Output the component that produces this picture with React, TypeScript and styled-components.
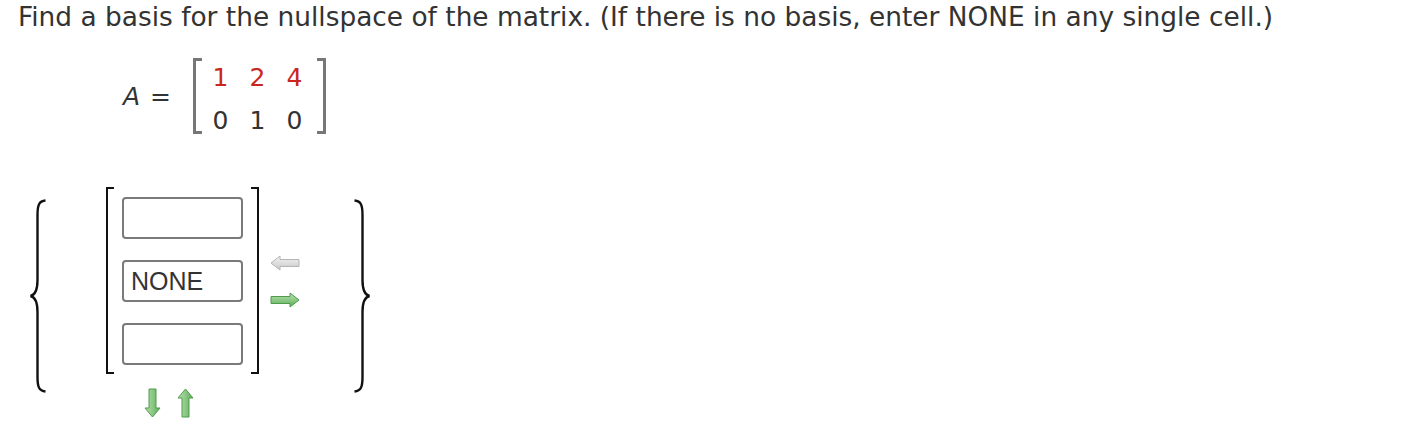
import React from 'react';
import styled, { createGlobalStyle } from 'styled-components';

const GlobalStyle = createGlobalStyle`
    body {
        margin: 0;
        background: #fff;
        font-family: "DejaVu Sans", Verdana, sans-serif;
        color: #333;
    }
`;

const Page = styled.div`
    padding: 2px 0 0 18px;
`;

const Prompt = styled.div`
    font-size: 26.4px;
    line-height: 30px;
    white-space: nowrap;
`;

const MatrixLine = styled.div`
    display: flex;
    align-items: center;
    margin: 26px 0 0 105px;
    height: 76px;
`;

const Label = styled.span`
    font-size: 25px;
    margin-right: 22px;
    i { margin-right: 10px; }
`;

const Bracket = styled.div<{ side: 'left' | 'right'; color?: string; weight?: number }>`
    align-self: stretch;
    width: 6px;
    border: ${p => p.weight || 3}px solid ${p => p.color || '#777'};
    ${p => (p.side === 'left' ? 'border-right: none;' : 'border-left: none;')}
`;

const Grid = styled.div`
    display: grid;
    grid-template-columns: repeat(3, 37px);
    grid-auto-rows: 43px;
    align-items: center;
    justify-items: center;
    padding: 5px 4px 0 0;
    font-size: 25px;
`;

const Cell = styled.span<{ red?: boolean }>`
    color: ${p => (p.red ? '#c9271d' : '#333')};
`;

const AnswerRow = styled.div`
    display: flex;
    align-items: flex-start;
    margin-top: 53px;
`;

const Brace = styled.div`
    margin-top: 12px;
    flex: none;
    display: flex;
`;

const VectorColumn = styled.div`
    display: flex;
    flex-direction: column;
    margin-left: 59px;
`;

const VectorRow = styled.div`
    display: flex;
    align-items: center;
`;

const Vector = styled.div`
    display: flex;
    height: 187px;
`;

const Entries = styled.div`
    display: flex;
    flex-direction: column;
    gap: 21px;
    padding: 10px 8px 0 8px;
`;

const Entry = styled.input`
    box-sizing: border-box;
    width: 121px;
    height: 42px;
    border: 2px solid #7a7a7a;
    border-radius: 4px;
    padding: 0 7px;
    font-family: "Liberation Sans", Arial, sans-serif;
    font-size: 25px;
    color: #333;
    background: #fff;
    outline: none;
`;

const SideArrows = styled.div`
    display: flex;
    flex-direction: column;
    gap: 21px;
    margin: 2px 0 0 11px;
`;

const BottomArrows = styled.div`
    display: flex;
    gap: 16px;
    margin: 14px 0 0 38px;
`;

const RightBrace = styled(Brace)`
    margin-left: 53px;
`;

const CurlyBrace = ({ flip }: { flip?: boolean }) => (
    <svg width="18" height="194" viewBox="0 0 18 194" style={flip ? { transform: 'scaleX(-1)' } : undefined}>
        <path
            d="M16.5 1.5 C10 2 8.5 6 8.5 16 L8.5 81 C8.5 92 6 96 1.5 97 C6 98 8.5 102 8.5 113 L8.5 178 C8.5 188 10 192 16.5 192.5"
            fill="none"
            stroke="#111"
            strokeWidth="2.4"
        />
    </svg>
);

const HArrow = ({ dir, tone }: { dir: 'left' | 'right'; tone: 'gray' | 'green' }) => {
    const id = `h-${dir}-${tone}`;
    const stops = tone === 'gray' ? ['#f4f4f4', '#c8c8c8'] : ['#b8e2b0', '#5fae5a'];
    const edge = tone === 'gray' ? '#b4b4b4' : '#4f9a4b';
    return (
        <svg width="30" height="16" viewBox="0 0 30 16" style={dir === 'right' ? { transform: 'scaleX(-1)' } : undefined}>
            <defs>
                <linearGradient id={id} x1="0" y1="0" x2="0" y2="1">
                    <stop offset="0" stopColor={stops[0]} />
                    <stop offset="1" stopColor={stops[1]} />
                </linearGradient>
            </defs>
            <path d="M1 8 L10 1 L10 4.5 L29 4.5 L29 11.5 L10 11.5 L10 15 Z" fill={`url(#${id})`} stroke={edge} strokeWidth="1" strokeLinejoin="round" />
        </svg>
    );
};

const VArrow = ({ dir }: { dir: 'up' | 'down' }) => {
    const id = `v-${dir}`;
    return (
        <svg width="17" height="30" viewBox="0 0 17 30" style={dir === 'down' ? { transform: 'scaleY(-1)' } : undefined}>
            <defs>
                <linearGradient id={id} x1="0" y1="0" x2="1" y2="0">
                    <stop offset="0" stopColor="#b8e2b0" />
                    <stop offset="1" stopColor="#5fae5a" />
                </linearGradient>
            </defs>
            <path d="M8.5 1 L16 10 L12 10 L12 29 L5 29 L5 10 L1 10 Z" fill={`url(#${id})`} stroke="#4f9a4b" strokeWidth="1" strokeLinejoin="round" />
        </svg>
    );
};

const App = () => (
    <Page>
        <GlobalStyle />
        <Prompt>
            Find a basis for the nullspace of the matrix. (If there is no basis, enter NONE in any single cell.)
        </Prompt>

        <MatrixLine>
            <Label><i>A</i>=</Label>
            <Bracket side="left" />
            <Grid>
                <Cell red>1</Cell>
                <Cell red>2</Cell>
                <Cell red>4</Cell>
                <Cell>0</Cell>
                <Cell>1</Cell>
                <Cell>0</Cell>
            </Grid>
            <Bracket side="right" />
        </MatrixLine>

        <AnswerRow>
            <Brace style={{ marginLeft: 11 }}>
                <CurlyBrace />
            </Brace>
            <VectorColumn>
                <VectorRow>
                    <Vector>
                        <Bracket side="left" color="#111" weight={2} />
                        <Entries>
                            <Entry defaultValue="" />
                            <Entry defaultValue="NONE" />
                            <Entry defaultValue="" />
                        </Entries>
                        <Bracket side="right" color="#111" weight={2} />
                    </Vector>
                    <SideArrows>
                        <HArrow dir="left" tone="gray" />
                        <HArrow dir="right" tone="green" />
                    </SideArrows>
                </VectorRow>
                <BottomArrows>
                    <VArrow dir="down" />
                    <VArrow dir="up" />
                </BottomArrows>
            </VectorColumn>
            <RightBrace>
                <CurlyBrace flip />
            </RightBrace>
        </AnswerRow>
    </Page>
);

export default App;
